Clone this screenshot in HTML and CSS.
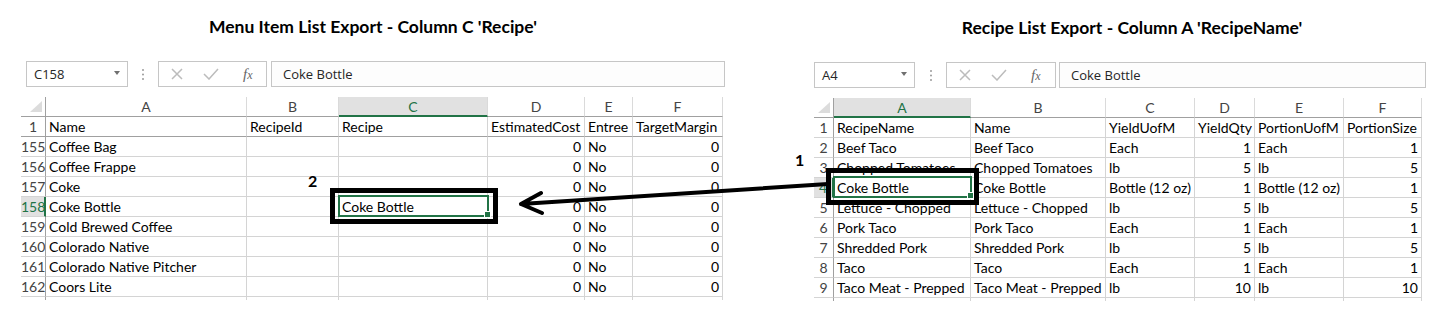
FILE: index.html
```html
<!DOCTYPE html>
<html lang="en">
<head>
  <meta charset="UTF-8" />
  <meta name="viewport" content="width=device-width, initial-scale=1" />
  <title>Menu Item / Recipe export lookup</title>
  <link rel="stylesheet" href="styles.css">
</head>
<body>
  <div class="page">
    <section class="panel panel-menu">
      <h1 class="title">Menu Item List Export - Column C 'Recipe'</h1>
      <div class="fbar">
        <div class="namebox"><span>C158</span><i class="caret"></i></div>
        <div class="grip">
          <svg width="4" height="13" viewBox="0 0 4 13"><circle cx="2" cy="2" r="1"/><circle cx="2" cy="6.5" r="1"/><circle cx="2" cy="11" r="1"/></svg>
        </div>
        <div class="fbtns">
          <svg class="ico-x" width="12" height="12" viewBox="0 0 12 12"><path d="M1 1 L11 11 M11 1 L1 11"/></svg>
          <svg class="ico-ok" width="16" height="12" viewBox="0 0 16 12"><path d="M1 6 L6 11 L15 1"/></svg>
          <span class="fx">f<small>x</small></span>
        </div>
        <div class="formula">Coke Bottle</div>
      </div>
      <div class="sheet sheet-menu">
        <div class="row head">
          <div class="corner"><svg width="12" height="11" viewBox="0 0 12 11"><polygon points="12,0 12,11 0,11"/></svg></div>
          <div>A</div><div>B</div><div class="sel-h">C</div><div>D</div><div>E</div><div>F</div>
        </div>
        <div class="row frozen">
          <div class="rh">1</div><div>Name</div><div>RecipeId</div><div>Recipe</div><div>EstimatedCost</div><div>Entree</div><div>TargetMargin</div>
        </div>
        <div class="row">
          <div class="rh">155</div><div>Coffee Bag</div><div></div><div></div><div class="num">0</div><div>No</div><div class="num">0</div>
        </div>
        <div class="row">
          <div class="rh">156</div><div>Coffee Frappe</div><div></div><div></div><div class="num">0</div><div>No</div><div class="num">0</div>
        </div>
        <div class="row">
          <div class="rh">157</div><div>Coke</div><div></div><div></div><div class="num">0</div><div>No</div><div class="num">0</div>
        </div>
        <div class="row">
          <div class="rh sel-r">158</div><div>Coke Bottle</div><div></div><div class="cur">Coke Bottle</div><div class="num">0</div><div>No</div><div class="num">0</div>
        </div>
        <div class="row">
          <div class="rh">159</div><div>Cold Brewed Coffee</div><div></div><div></div><div class="num">0</div><div>No</div><div class="num">0</div>
        </div>
        <div class="row">
          <div class="rh">160</div><div>Colorado Native</div><div></div><div></div><div class="num">0</div><div>No</div><div class="num">0</div>
        </div>
        <div class="row">
          <div class="rh">161</div><div>Colorado Native Pitcher</div><div></div><div></div><div class="num">0</div><div>No</div><div class="num">0</div>
        </div>
        <div class="row">
          <div class="rh">162</div><div>Coors Lite</div><div></div><div></div><div class="num">0</div><div>No</div><div class="num">0</div>
        </div>
        <div class="row tail">
          <div></div><div></div><div></div><div></div><div></div><div></div><div></div>
        </div>
      </div>
    </section>

    <section class="panel panel-recipe">
      <h1 class="title">Recipe List Export - Column A 'RecipeName'</h1>
      <div class="fbar">
        <div class="namebox"><span>A4</span><i class="caret"></i></div>
        <div class="grip">
          <svg width="4" height="13" viewBox="0 0 4 13"><circle cx="2" cy="2" r="1"/><circle cx="2" cy="6.5" r="1"/><circle cx="2" cy="11" r="1"/></svg>
        </div>
        <div class="fbtns">
          <svg class="ico-x" width="12" height="12" viewBox="0 0 12 12"><path d="M1 1 L11 11 M11 1 L1 11"/></svg>
          <svg class="ico-ok" width="16" height="12" viewBox="0 0 16 12"><path d="M1 6 L6 11 L15 1"/></svg>
          <span class="fx">f<small>x</small></span>
        </div>
        <div class="formula">Coke Bottle</div>
      </div>
      <div class="sheet sheet-recipe">
        <div class="row head">
          <div class="corner"><svg width="12" height="11" viewBox="0 0 12 11"><polygon points="12,0 12,11 0,11"/></svg></div>
          <div class="sel-h">A</div><div>B</div><div>C</div><div>D</div><div>E</div><div>F</div>
        </div>
        <div class="row">
          <div class="rh">1</div><div>RecipeName</div><div>Name</div><div>YieldUofM</div><div>YieldQty</div><div>PortionUofM</div><div>PortionSize</div>
        </div>
        <div class="row">
          <div class="rh">2</div><div>Beef Taco</div><div>Beef Taco</div><div>Each</div><div class="num">1</div><div>Each</div><div class="num">1</div>
        </div>
        <div class="row">
          <div class="rh">3</div><div>Chopped Tomatoes</div><div>Chopped Tomatoes</div><div>lb</div><div class="num">5</div><div>lb</div><div class="num">5</div>
        </div>
        <div class="row">
          <div class="rh sel-r">4</div><div class="cur">Coke Bottle</div><div>Coke Bottle</div><div>Bottle (12 oz)</div><div class="num">1</div><div>Bottle (12 oz)</div><div class="num">1</div>
        </div>
        <div class="row">
          <div class="rh">5</div><div>Lettuce - Chopped</div><div>Lettuce - Chopped</div><div>lb</div><div class="num">5</div><div>lb</div><div class="num">5</div>
        </div>
        <div class="row">
          <div class="rh">6</div><div>Pork Taco</div><div>Pork Taco</div><div>Each</div><div class="num">1</div><div>Each</div><div class="num">1</div>
        </div>
        <div class="row">
          <div class="rh">7</div><div>Shredded Pork</div><div>Shredded Pork</div><div>lb</div><div class="num">5</div><div>lb</div><div class="num">5</div>
        </div>
        <div class="row">
          <div class="rh">8</div><div>Taco</div><div>Taco</div><div>Each</div><div class="num">1</div><div>Each</div><div class="num">1</div>
        </div>
        <div class="row">
          <div class="rh">9</div><div>Taco Meat - Prepped</div><div>Taco Meat - Prepped</div><div>lb</div><div class="num">10</div><div>lb</div><div class="num">10</div>
        </div>
        <div class="row tail">
          <div></div><div></div><div></div><div></div><div></div><div></div><div></div>
        </div>
      </div>
    </section>

    <!-- annotations drawn over both sheets -->
    <div class="notes">
      <svg class="marks" width="1450" height="325" viewBox="0 0 1450 325">
        <rect x="332.5" y="190.5" width="163" height="31"/>
        <rect x="828.5" y="170.5" width="148" height="32"/>
        <path d="M828 184 L521 204 M541 193 L521 204 L542 213"/>
      </svg>
      <span class="step step-1">1</span>
      <span class="step step-2">2</span>
    </div>
  </div>
</body>
</html>
```

FILE: styles.css
```css
body {
  margin: 0;
  background: #fff;
  font-family: Lato, "Liberation Sans", sans-serif;
  color: #000;
}
.page {
  position: relative;
  display: flex;
  gap: 89px;
  height: 325px;
  padding-left: 21px;
}
.panel {
  display: flex;
  flex-direction: column;
}
.panel-menu {
  width: 704px;
}
.panel-recipe {
  width: 612px;
  padding-top: 1px;
}
.title {
  margin: 0;
  padding-top: 16px;
  font-size: 17.5px;
  line-height: 21px;
  font-weight: 700;
  text-align: center;
}
.panel-recipe .title {
  padding-left: 24px;
}

/* formula bar */
.fbar {
  display: flex;
  height: 26px;
  margin-top: 24px;
  font-family: "Open Sans", sans-serif;
  font-size: 13px;
  color: #262626;
}
.panel-menu .fbar {
  padding-left: 5px;
}
.namebox {
  display: flex;
  align-items: center;
  width: 102px;
  padding-left: 7px;
  box-sizing: border-box;
  border: 1px solid #c6c6c6;
}
.panel-recipe .namebox {
  width: 101px;
}
.caret {
  margin-left: auto;
  margin-right: 7px;
  margin-top: -3px;
  border-left: 3.5px solid transparent;
  border-right: 3.5px solid transparent;
  border-top: 4px solid #707070;
}
.grip {
  display: flex;
  align-items: center;
  justify-content: center;
  width: 30px;
}
.panel-recipe .grip {
  width: 31px;
}
.grip svg {
  fill: #9a9a9a;
}
.fbtns {
  display: flex;
  align-items: center;
  width: 109px;
  padding-left: 12px;
  box-sizing: border-box;
  border: 1px solid #c6c6c6;
}
.panel-recipe .fbtns {
  width: 110px;
}
.fbtns svg {
  fill: none;
  stroke: #bcbcbc;
  stroke-width: 1.5;
}
.ico-ok {
  margin-left: 20px;
}
.fx {
  margin-left: 24px;
  font-family: "Liberation Serif", serif;
  font-style: italic;
  font-size: 15px;
  color: #666;
}
.fx small {
  font-size: 12px;
}
.formula {
  flex: 1;
  margin-left: 4px;
  padding-left: 11px;
  border: 1px solid #c6c6c6;
  background: #fdfdfd;
  line-height: 24px;
}
.panel-recipe .formula {
  margin-left: 3px;
}

/* sheet grid */
.sheet {
  display: grid;
  grid-auto-rows: 20px;
  margin-top: 10px;
  font-size: 14px;
  line-height: 19px;
}
.sheet-menu {
  grid-template-columns: 25px 201px 92px 149px 97px 48px 90px;
}
.sheet-recipe {
  grid-template-columns: 20px 137px 135px 89px 60px 89px 78px;
}
.row {
  display: contents;
}
.row > div {
  padding: 0 3px;
  box-sizing: border-box;
  border-right: 1px solid #d4d4d4;
  border-bottom: 1px solid #d4d4d4;
  white-space: nowrap;
  overflow: hidden;
}
.row > .rh {
  padding: 0;
  border-right-color: #a0a0a0;
  text-align: center;
  color: #444;
}
.row > .num {
  text-align: right;
}
.head > div {
  text-align: center;
  color: #444;
  border-right-color: #dadada;
  border-bottom-color: #a0a0a0;
}
.head > .corner {
  display: flex;
  align-items: flex-end;
  justify-content: flex-end;
  padding: 0 3px 4px 0;
  border-right-color: #a0a0a0;
}
.corner svg {
  fill: #dcdcdc;
}
.frozen > div {
  border-bottom-color: #a0a0a0;
}
.tail > div {
  height: 3px;
  border-bottom: none;
}
.tail > div:first-child {
  border-right-color: #a0a0a0;
}
.row > .sel-h {
  background: #e1e1e1;
  color: #217346;
  border-bottom: 2px solid #217346;
}
.row > .sel-r {
  background: #e1e1e1;
  color: #217346;
  border-right: 2px solid #217346;
}
.row > .cur {
  position: relative;
  overflow: visible;
}
.cur::after {
  content: "";
  position: absolute;
  left: -1px;
  top: -2px;
  right: -2px;
  bottom: -1px;
  border: 2px solid #217346;
}
.cur::before {
  content: "";
  position: absolute;
  right: -4px;
  bottom: -2px;
  width: 7px;
  height: 7px;
  box-sizing: border-box;
  background: #217346;
  border: 1px solid #fff;
  z-index: 1;
}

/* annotations */
.notes {
  position: absolute;
  inset: 0;
  pointer-events: none;
}
.marks {
  position: absolute;
  left: 0;
  top: 0;
  fill: none;
  stroke: #000;
}
.marks rect {
  stroke-width: 5;
}
.marks path {
  stroke-width: 4;
  stroke-linecap: round;
  stroke-linejoin: round;
}
.step {
  position: absolute;
  font-size: 16px;
  line-height: 16px;
  font-weight: 700;
}
.step-1 {
  left: 795px;
  top: 152px;
}
.step-2 {
  left: 308px;
  top: 173px;
}
```
